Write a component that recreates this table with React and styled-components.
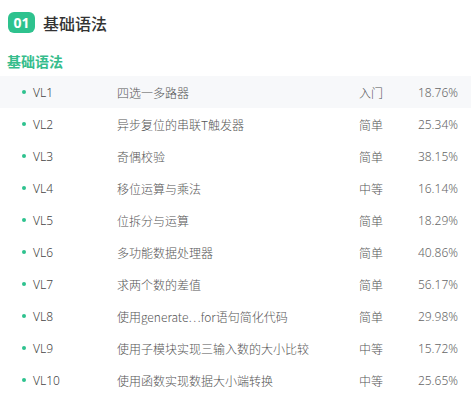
import React from "react";
import styled, { createGlobalStyle } from "styled-components";

const GlobalStyle = createGlobalStyle`
  body {
    margin: 0;
    background: #fff;
    font-family: "Microsoft YaHei", "Noto Sans CJK SC", "Noto Sans", sans-serif;
  }
`;

const Page = styled.div`
  width: 474px;
  padding-top: 11px;
`;

const Header = styled.div`
  display: flex;
  align-items: center;
  gap: 8px;
  padding-left: 8px;
  height: 23px;
`;

const Badge = styled.span`
  display: inline-flex;
  align-items: center;
  justify-content: center;
  width: 27px;
  height: 21px;
  border-radius: 6px;
  background: #2ec28e;
  color: #fff;
  font-family: "Noto Sans", sans-serif;
  font-weight: 700;
  font-size: 14px;
`;

const Title = styled.h1`
  margin: 0;
  font-size: 16px;
  font-weight: 500;
  color: #333;
`;

const SubTitle = styled.h2`
  margin: 17px 0 5px 7px;
  font-size: 14px;
  font-weight: 700;
  color: #36bd8c;
  line-height: 20px;
`;

const List = styled.div`
  width: 471px;
`;

const Row = styled.div`
  display: grid;
  grid-template-columns: 95px 242px 1fr auto;
  align-items: center;
  height: 32px;
  padding: 0 13px 0 22px;
  box-sizing: border-box;
  font-size: 12px;
  font-weight: 300;
  color: #555;
  background: ${(p) => (p.$active ? "#f7f8fa" : "transparent")};
`;

const Code = styled.span`
  display: flex;
  align-items: center;
  gap: 7px;
  font-family: "Noto Sans", sans-serif;
  font-size: 12px;
  color: #444;
  &::before {
    content: "";
    width: 4px;
    height: 4px;
    border-radius: 50%;
    background: #2ec28e;
  }
`;

const Percent = styled.span`
  font-family: "Noto Sans", sans-serif;
  color: #666;
`;

const rows = [
  ["VL1", "四选一多路器", "入门", "18.76%"],
  ["VL2", "异步复位的串联T触发器", "简单", "25.34%"],
  ["VL3", "奇偶校验", "简单", "38.15%"],
  ["VL4", "移位运算与乘法", "中等", "16.14%"],
  ["VL5", "位拆分与运算", "简单", "18.29%"],
  ["VL6", "多功能数据处理器", "简单", "40.86%"],
  ["VL7", "求两个数的差值", "简单", "56.17%"],
  ["VL8", "使用generate…for语句简化代码", "简单", "29.98%"],
  ["VL9", "使用子模块实现三输入数的大小比较", "中等", "15.72%"],
  ["VL10", "使用函数实现数据大小端转换", "中等", "25.65%"],
];

export default function App() {
  return (
    <Page>
      <GlobalStyle />
      <Header>
        <Badge>01</Badge>
        <Title>基础语法</Title>
      </Header>
      <SubTitle>基础语法</SubTitle>
      <List>
        {rows.map(([code, name, level, pct], i) => (
          <Row key={code} $active={i === 0}>
            <Code>{code}</Code>
            <span>{name}</span>
            <span>{level}</span>
            <Percent>{pct}</Percent>
          </Row>
        ))}
      </List>
    </Page>
  );
}
